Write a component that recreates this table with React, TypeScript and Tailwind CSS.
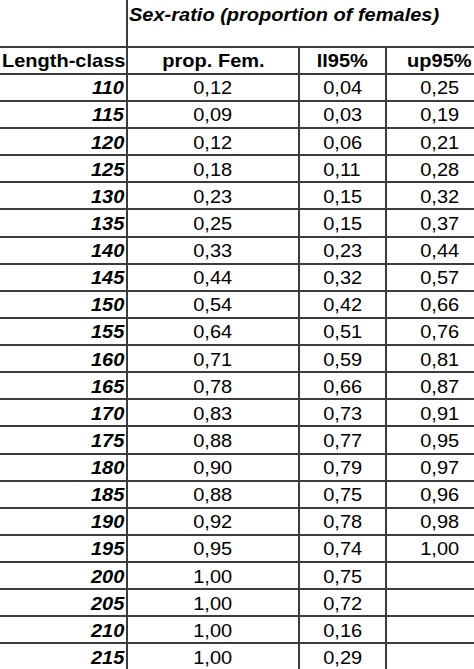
import React from "react";

const rows: [string, string, string, string][] = [
  ["110", "0,12", "0,04", "0,25"],
  ["115", "0,09", "0,03", "0,19"],
  ["120", "0,12", "0,06", "0,21"],
  ["125", "0,18", "0,11", "0,28"],
  ["130", "0,23", "0,15", "0,32"],
  ["135", "0,25", "0,15", "0,37"],
  ["140", "0,33", "0,23", "0,44"],
  ["145", "0,44", "0,32", "0,57"],
  ["150", "0,54", "0,42", "0,66"],
  ["155", "0,64", "0,51", "0,76"],
  ["160", "0,71", "0,59", "0,81"],
  ["165", "0,78", "0,66", "0,87"],
  ["170", "0,83", "0,73", "0,91"],
  ["175", "0,88", "0,77", "0,95"],
  ["180", "0,90", "0,79", "0,97"],
  ["185", "0,88", "0,75", "0,96"],
  ["190", "0,92", "0,78", "0,98"],
  ["195", "0,95", "0,74", "1,00"],
  ["200", "1,00", "0,75", ""],
  ["205", "1,00", "0,72", ""],
  ["210", "1,00", "0,16", ""],
  ["215", "1,00", "0,29", ""],
];

const cell = "border-r-2 border-b-2 border-[#3c3c3c] flex items-center h-[27.14px]";
const txt = "inline-block scale-x-[1.1] text-[18.2px] leading-none";

export default function App() {
  return (
    <div
      className="w-[474px] h-[669px] overflow-hidden bg-white text-black"
      style={{ fontFamily: '"Liberation Sans", Arial, sans-serif' }}
    >
      <div className="w-[494px]">
        {/* Title row */}
        <div className="grid grid-cols-[128px_366px] h-[47.7px] border-b-2 border-[#3c3c3c]">
          <div className="border-r-2 border-[#3c3c3c]" />
          <div className="pl-[1px] pt-[4px]">
            <span className={`${txt} origin-left font-bold italic`}>
              Sex-ratio (proportion of females)
            </span>
          </div>
        </div>
        {/* Header row */}
        <div className="grid grid-cols-[128px_172px_87px_107px]">
          <div className={`${cell} h-[26.6px] justify-start pl-[2px] pt-[2px]`}>
            <span className={`${txt} origin-left font-bold`}>Length-class</span>
          </div>
          <div className={`${cell} h-[26.6px] justify-center pt-[2px]`}>
            <span className={`${txt} origin-center font-bold`}>prop. Fem.</span>
          </div>
          <div className={`${cell} h-[26.6px] justify-center pt-[2px]`}>
            <span className={`${txt} origin-center font-bold`}>ll95%</span>
          </div>
          <div className={`${cell} h-[26.6px] justify-center pt-[2px]`}>
            <span className={`${txt} origin-center font-bold`}>up95%</span>
          </div>
        </div>
        {rows.map(([len, p, lo, up]) => (
          <div key={len} className="grid grid-cols-[128px_172px_87px_107px]">
            <div className={`${cell} justify-end pr-[2px] pt-[2px]`}>
              <span className={`${txt} origin-right font-bold italic`}>{len}</span>
            </div>
            <div className={`${cell} justify-center pt-[2px]`}>
              <span className={`${txt} origin-center`}>{p}</span>
            </div>
            <div className={`${cell} justify-center pt-[2px]`}>
              <span className={`${txt} origin-center`}>{lo}</span>
            </div>
            <div className={`${cell} justify-center pt-[2px]`}>
              <span className={`${txt} origin-center`}>{up}</span>
            </div>
          </div>
        ))}
      </div>
    </div>
  );
}
